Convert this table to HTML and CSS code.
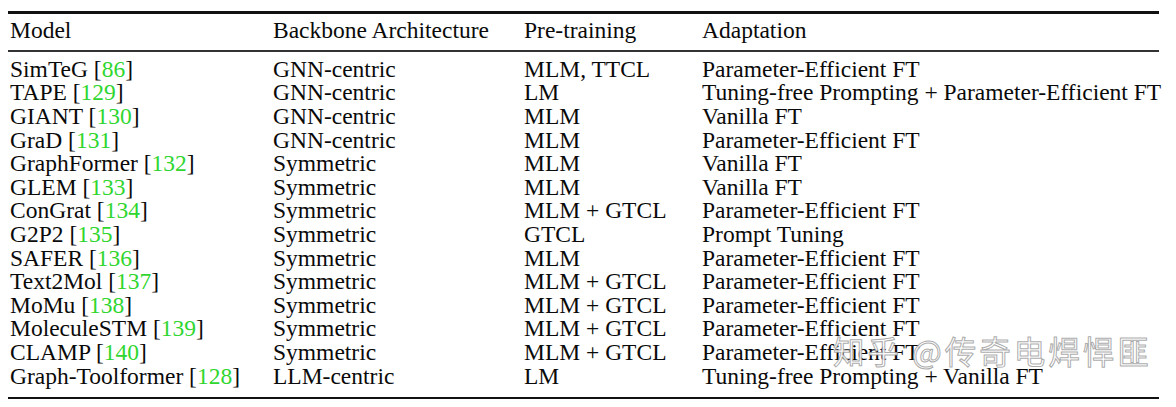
FILE: index.html
```html
<!DOCTYPE html>
<html lang="en">
<head>
<meta charset="utf-8">
<title>Table</title>
<link rel="stylesheet" href="styles.css">
</head>
<body>
<div class="page">
  <div class="tbl">
    <div class="rule thick"></div>
    <div class="row head">
      <div class="c c1">Model</div>
      <div class="c c2">Backbone Architecture</div>
      <div class="c c3">Pre-training</div>
      <div class="c c4">Adaptation</div>
    </div>
    <div class="rule mid"></div>
    <div class="body">
      <div class="row"><div class="c c1">SimTeG [<span class="cite">86</span>]</div><div class="c c2">GNN-centric</div><div class="c c3">MLM, TTCL</div><div class="c c4">Parameter-Efficient FT</div></div>
      <div class="row"><div class="c c1">TAPE [<span class="cite">129</span>]</div><div class="c c2">GNN-centric</div><div class="c c3">LM</div><div class="c c4">Tuning-free Prompting + Parameter-Efficient FT</div></div>
      <div class="row"><div class="c c1">GIANT [<span class="cite">130</span>]</div><div class="c c2">GNN-centric</div><div class="c c3">MLM</div><div class="c c4">Vanilla FT</div></div>
      <div class="row"><div class="c c1">GraD [<span class="cite">131</span>]</div><div class="c c2">GNN-centric</div><div class="c c3">MLM</div><div class="c c4">Parameter-Efficient FT</div></div>
      <div class="row"><div class="c c1">GraphFormer [<span class="cite">132</span>]</div><div class="c c2">Symmetric</div><div class="c c3">MLM</div><div class="c c4">Vanilla FT</div></div>
      <div class="row"><div class="c c1">GLEM [<span class="cite">133</span>]</div><div class="c c2">Symmetric</div><div class="c c3">MLM</div><div class="c c4">Vanilla FT</div></div>
      <div class="row"><div class="c c1">ConGrat [<span class="cite">134</span>]</div><div class="c c2">Symmetric</div><div class="c c3">MLM + GTCL</div><div class="c c4">Parameter-Efficient FT</div></div>
      <div class="row"><div class="c c1">G2P2 [<span class="cite">135</span>]</div><div class="c c2">Symmetric</div><div class="c c3">GTCL</div><div class="c c4">Prompt Tuning</div></div>
      <div class="row"><div class="c c1">SAFER [<span class="cite">136</span>]</div><div class="c c2">Symmetric</div><div class="c c3">MLM</div><div class="c c4">Parameter-Efficient FT</div></div>
      <div class="row"><div class="c c1">Text2Mol [<span class="cite">137</span>]</div><div class="c c2">Symmetric</div><div class="c c3">MLM + GTCL</div><div class="c c4">Parameter-Efficient FT</div></div>
      <div class="row"><div class="c c1">MoMu [<span class="cite">138</span>]</div><div class="c c2">Symmetric</div><div class="c c3">MLM + GTCL</div><div class="c c4">Parameter-Efficient FT</div></div>
      <div class="row"><div class="c c1">MoleculeSTM [<span class="cite">139</span>]</div><div class="c c2">Symmetric</div><div class="c c3">MLM + GTCL</div><div class="c c4">Parameter-Efficient FT</div></div>
      <div class="row"><div class="c c1">CLAMP [<span class="cite">140</span>]</div><div class="c c2">Symmetric</div><div class="c c3">MLM + GTCL</div><div class="c c4">Parameter-Efficient FT</div></div>
      <div class="row"><div class="c c1">Graph-Toolformer [<span class="cite">128</span>]</div><div class="c c2">LLM-centric</div><div class="c c3">LM</div><div class="c c4">Tuning-free Prompting + Vanilla FT</div></div>
    </div>
    <div class="rule thick bottom"></div>
  </div>
  <div class="watermark">知乎 @传奇电焊悍匪</div>
</div>
</body>
</html>
```

FILE: styles.css
```css
html, body {
  margin: 0;
  padding: 0;
  background: #ffffff;
}
.page {
  position: relative;
  width: 1176px;
  height: 407px;
  overflow: hidden;
  font-family: "Liberation Serif", "Times New Roman", serif;
  font-size: 23.5px;
  color: #0a0a0a;
}
.tbl {
  display: flex;
  flex-direction: column;
  width: 1151px;
  margin-left: 8px;
  padding-top: 11px;
}
.rule {
  background: #111111;
}
.rule.thick {
  height: 2.5px;
}
.rule.mid {
  height: 1.3px;
  background: #333333;
  margin-top: 8px;
}
.rule.bottom {
  margin-top: 8.4px;
}
.row {
  display: grid;
  grid-template-columns: 265px 251px 178px 1fr;
  line-height: 23.6px;
  height: 23.6px;
  white-space: nowrap;
}
.row.head {
  margin-top: 5.2px;
}
.body {
  display: flex;
  flex-direction: column;
  padding-top: 6.3px;
}
.c1 {
  padding-left: 2px;
}
.cite {
  color: #2fd62f;
}
.watermark {
  position: absolute;
  left: 833px;
  top: 332px;
  font-family: "Noto Sans CJK SC", sans-serif;
  font-size: 31.5px;
  line-height: 36px;
  letter-spacing: 3px;
  color: rgba(255, 255, 255, 0.88);
  -webkit-text-stroke: 1px rgba(150, 150, 150, 0.8);
  white-space: nowrap;
}
```
